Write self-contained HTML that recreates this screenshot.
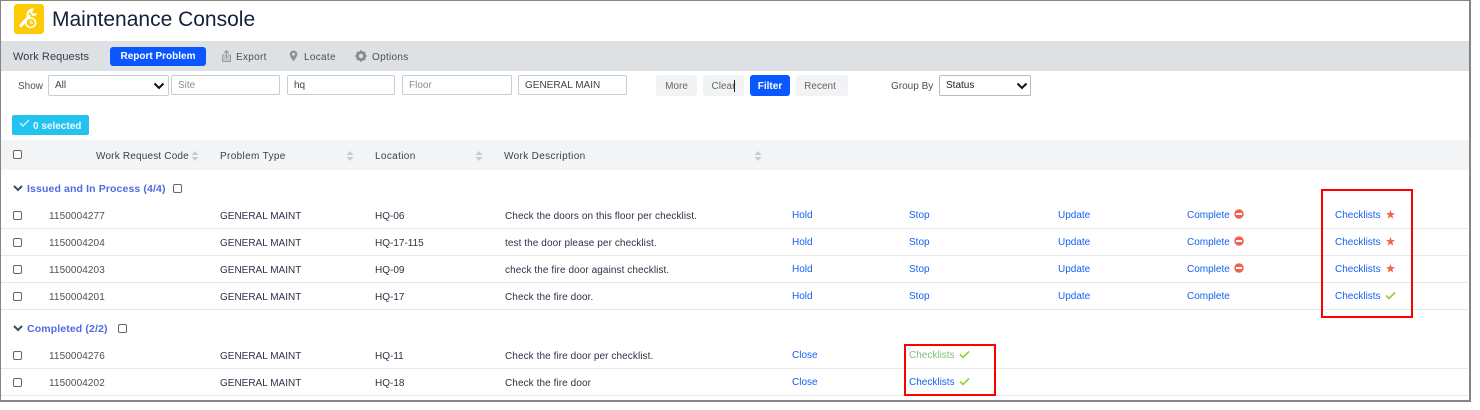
<!DOCTYPE html>
<html><head><meta charset="utf-8"><title>Maintenance Console</title>
<style>
html,body{margin:0;padding:0;background:#fff}
#p{position:relative;width:1480px;height:410px;overflow:hidden;background:#fff;font-family:"Liberation Sans",sans-serif;font-size:10px;color:#2b3344}
#p>*{position:absolute}
.t{line-height:14px;white-space:nowrap}
.x{letter-spacing:.08px}
.l{color:#1560f5}
.g{color:#4a5058}
.h{font-size:10px;letter-spacing:.35px;color:#39404e;font-weight:normal}
.i{border:1px solid #c9cdd2;border-radius:2px;background:#fff;box-sizing:border-box;line-height:20px;padding-left:6px;white-space:nowrap;color:#444}
.ph{color:#8a8f96}
.b{border-radius:3px;text-align:center;line-height:23px;background:#f1f3f5;color:#666}
.cb{width:7px;height:7px;border:1px solid #666;border-radius:2px;background:#fff;box-sizing:content-box}
.d{left:1px;width:1467px;height:1px;background:#e6e7e8}
.hq{font-weight:bold;color:#4f6be3;font-size:10.5px;line-height:14px;white-space:nowrap;letter-spacing:.12px}
.rb{border:2px solid #f00;box-sizing:border-box}
</style></head><body><div id="p">
<div style="left:0;top:0;width:1470px;height:1px;background:#858585"></div>
<div style="left:0;top:0;width:1px;height:402px;background:#858585"></div>
<div style="left:1469px;top:0;width:2px;height:402px;background:#858585"></div>
<div style="left:0;top:400px;width:1471px;height:2px;background:#858585"></div>

<div style="left:14px;top:4px;width:30px;height:30px;background:#fccb05;border-radius:3px"></div>
<svg style="left:14px;top:4px" width="30" height="30" viewBox="0 0 30 30" fill="none" stroke="#fff"><path d="M7 21.500l8-9" stroke-width="3.200" stroke-linecap="round"/><path d="M14 13c-1.500-3.500 1-7.500 4.500-7.500l-1.500 3 2 2.500 3.500-1" stroke-width="2"/><circle cx="16.700" cy="18.700" r="4.800" stroke-width="1.600" fill="#fccb05"/><path d="M16.700 16.200v2.800h2.300" stroke-width="1.200"/></svg>
<div class="t" style="left:52px;top:9px;font-size:21px;line-height:22px;color:#14213d">Maintenance Console</div>

<div style="left:1px;top:41px;width:1468px;height:30px;background:#dee1e4"></div>
<div class="t" style="left:13px;top:50px;font-size:11px;letter-spacing:.08px;color:#333b4c">Work Requests</div>
<div style="left:110px;top:47px;width:96px;height:19px;background:#0a57ff;border-radius:3px;color:#fff;font-weight:bold;text-align:center;line-height:20px;font-size:10px">Report Problem</div>
<svg style="left:221px;top:49px" width="11" height="14" viewBox="0 0 11 14" fill="none" stroke="#9a9ea3"><path d="M3.500 6H1.500v6.500h8V6H7.500" fill="#c4c8cb"/><path d="M5.500 9V2M3.300 4L5.500 1.700 7.700 4" stroke-width="1.300"/></svg>
<div class="t g" style="left:236px;top:51px;letter-spacing:.3px">Export</div>
<svg style="left:289px;top:50px" width="9" height="12" viewBox="0 0 9 12"><path d="M4.500 0.500a3.800 3.800 0 0 1 3.800 3.800c0 2.500-3.800 7-3.800 7s-3.800-4.500-3.800-7A3.800 3.800 0 0 1 4.500 .5z" fill="#8e9297"/><circle cx="4.500" cy="4.300" r="1.400" fill="#dee1e4"/></svg>
<div class="t g" style="left:304px;top:51px;letter-spacing:.3px">Locate</div>
<svg style="left:355px;top:50px" width="12" height="12" viewBox="0 0 12 12"><circle cx="6" cy="6" r="3.700" fill="none" stroke="#85898e" stroke-width="2.400"/><path d="M6 .3v11.400M.3 6h11.400M2 2l8 8M10 2l-8 8" stroke="#85898e" stroke-width="1.800"/><circle cx="6" cy="6" r="2.200" fill="#dee1e4"/></svg>
<div class="t g" style="left:372px;top:51px;letter-spacing:.3px">Options</div>

<div class="t g" style="left:18px;top:80px">Show</div>
<div class="i" style="left:48px;top:75px;width:121px;height:21px">All</div>
<svg style="left:153px;top:82px" width="12" height="8" viewBox="0 0 12 8" fill="none" stroke="#111" stroke-width="2"><path d="M1.500 1.500L6 6l4.500-4.500"/></svg>
<div class="i ph" style="left:171px;top:75px;width:109px;height:20px">Site</div>
<div class="i" style="left:287px;top:75px;width:108px;height:20px">hq</div>
<div class="i ph" style="left:402px;top:75px;width:110px;height:20px">Floor</div>
<div class="i" style="left:518px;top:75px;width:109px;height:20px">GENERAL MAIN</div>
<div class="b" style="left:656px;top:75px;width:41px;height:21px">More</div>
<div class="b" style="left:703px;top:75px;width:41px;height:21px">Clear</div>
<div style="left:734px;top:80px;width:1px;height:12px;background:#222"></div>
<div class="b" style="left:750px;top:75px;width:40px;height:21px;background:#0a57ff;color:#fff;font-weight:bold">Filter</div>
<div class="b" style="left:796px;top:75px;width:48px;padding-right:4px;height:21px">Recent</div>
<div class="t g" style="left:891px;top:80px">Group By</div>
<div class="i" style="left:939px;top:75px;width:92px;height:21px;border-color:#bbb;color:#222">Status</div>
<svg style="left:1016px;top:82px" width="12" height="8" viewBox="0 0 12 8" fill="none" stroke="#111" stroke-width="2"><path d="M1.500 1.500L6 6l4.500-4.500"/></svg>

<div style="left:12px;top:115px;width:77px;height:20px;background:#22c3ee;border-radius:2px"></div>
<svg style="left:19px;top:119px" width="11" height="9" viewBox="0 0 11 9" fill="none" stroke="#d6f3fb" stroke-width="1.300"><path d="M1 4l3 3 6-6"/></svg>
<div class="t" style="left:33px;top:120px;color:#eefaff;font-weight:bold">0 selected</div>

<div style="left:1px;top:140px;width:1468px;height:30px;background:#f2f4f6"></div>
<div class="cb" style="left:13px;top:150px"></div>
<div class="t h" style="left:96px;top:150px;letter-spacing:.18px">Work Request Code</div>
<svg style="left:191px;top:151px" width="8" height="10" viewBox="0 0 8 10" fill="#c8ccd0"><path d="M4 0l3.500 4h-7zM4 10l3.500-4h-7z"/></svg>
<div class="t h" style="left:220px;top:150px">Problem Type</div>
<svg style="left:346px;top:151px" width="8" height="10" viewBox="0 0 8 10" fill="#c8ccd0"><path d="M4 0l3.500 4h-7zM4 10l3.500-4h-7z"/></svg>
<div class="t h" style="left:375px;top:150px">Location</div>
<svg style="left:475px;top:151px" width="8" height="10" viewBox="0 0 8 10" fill="#c8ccd0"><path d="M4 0l3.500 4h-7zM4 10l3.500-4h-7z"/></svg>
<div class="t h" style="left:504px;top:150px">Work Description</div>
<svg style="left:754px;top:151px" width="8" height="10" viewBox="0 0 8 10" fill="#c8ccd0"><path d="M4 0l3.500 4h-7zM4 10l3.500-4h-7z"/></svg>

<svg style="left:13px;top:185px" width="10" height="7" viewBox="0 0 10 7" fill="none" stroke="#3a4a68" stroke-width="2"><path d="M1 1l4 4 4-4"/></svg>
<div class="hq" style="left:27px;top:182px">Issued and In Process (4/4)</div>
<div class="cb" style="left:173px;top:184px"></div>

<div class="cb" style="left:13px;top:211px"></div>
<div class="t g" style="left:49px;top:210px;letter-spacing:.1px">1150004277</div>
<div class="t" style="left:220px;top:210px">GENERAL MAINT</div>
<div class="t" style="left:375px;top:210px">HQ-06</div>
<div class="t x" style="left:505px;top:210px">Check the doors on this floor per checklist.</div>
<div class="t l" style="left:792px;top:209px">Hold</div>
<div class="t l" style="left:909px;top:209px">Stop</div>
<div class="t l" style="left:1058px;top:209px">Update</div>
<div class="t l" style="left:1187px;top:209px">Complete</div>
<svg style="left:1234px;top:209px" width="10" height="10" viewBox="0 0 10 10"><circle cx="5" cy="5" r="4.700" fill="#f4604c"/><rect x="2" y="4" width="6" height="2" fill="#fff"/></svg>
<div class="t l" style="left:1335px;top:209px">Checklists</div>
<svg style="left:1386px;top:210px" width="9" height="9" viewBox="0 0 10 10"><path d="M5 0l1.300 3.500H10L7 5.800 8.100 9.600 5 7.400 1.900 9.600 3 5.800 0 3.500h3.700z" fill="#f4604c"/></svg>
<div class="d" style="top:228px"></div>

<div class="cb" style="left:13px;top:238px"></div>
<div class="t g" style="left:49px;top:237px;letter-spacing:.1px">1150004204</div>
<div class="t" style="left:220px;top:237px">GENERAL MAINT</div>
<div class="t" style="left:375px;top:237px">HQ-17-115</div>
<div class="t x" style="left:505px;top:237px">test the door please per checklist.</div>
<div class="t l" style="left:792px;top:236px">Hold</div>
<div class="t l" style="left:909px;top:236px">Stop</div>
<div class="t l" style="left:1058px;top:236px">Update</div>
<div class="t l" style="left:1187px;top:236px">Complete</div>
<svg style="left:1234px;top:236px" width="10" height="10" viewBox="0 0 10 10"><circle cx="5" cy="5" r="4.700" fill="#f4604c"/><rect x="2" y="4" width="6" height="2" fill="#fff"/></svg>
<div class="t l" style="left:1335px;top:236px">Checklists</div>
<svg style="left:1386px;top:237px" width="9" height="9" viewBox="0 0 10 10"><path d="M5 0l1.300 3.500H10L7 5.800 8.100 9.600 5 7.400 1.900 9.600 3 5.800 0 3.500h3.700z" fill="#f4604c"/></svg>
<div class="d" style="top:255px"></div>

<div class="cb" style="left:13px;top:265px"></div>
<div class="t g" style="left:49px;top:264px;letter-spacing:.1px">1150004203</div>
<div class="t" style="left:220px;top:264px">GENERAL MAINT</div>
<div class="t" style="left:375px;top:264px">HQ-09</div>
<div class="t x" style="left:505px;top:264px">check the fire door against checklist.</div>
<div class="t l" style="left:792px;top:263px">Hold</div>
<div class="t l" style="left:909px;top:263px">Stop</div>
<div class="t l" style="left:1058px;top:263px">Update</div>
<div class="t l" style="left:1187px;top:263px">Complete</div>
<svg style="left:1234px;top:263px" width="10" height="10" viewBox="0 0 10 10"><circle cx="5" cy="5" r="4.700" fill="#f4604c"/><rect x="2" y="4" width="6" height="2" fill="#fff"/></svg>
<div class="t l" style="left:1335px;top:263px">Checklists</div>
<svg style="left:1386px;top:264px" width="9" height="9" viewBox="0 0 10 10"><path d="M5 0l1.300 3.500H10L7 5.800 8.100 9.600 5 7.400 1.900 9.600 3 5.800 0 3.500h3.700z" fill="#f4604c"/></svg>
<div class="d" style="top:282px"></div>

<div class="cb" style="left:13px;top:292px"></div>
<div class="t g" style="left:49px;top:291px;letter-spacing:.1px">1150004201</div>
<div class="t" style="left:220px;top:291px">GENERAL MAINT</div>
<div class="t" style="left:375px;top:291px">HQ-17</div>
<div class="t x" style="left:505px;top:291px">Check the fire door.</div>
<div class="t l" style="left:792px;top:290px">Hold</div>
<div class="t l" style="left:909px;top:290px">Stop</div>
<div class="t l" style="left:1058px;top:290px">Update</div>
<div class="t l" style="left:1187px;top:290px">Complete</div>
<div class="t l" style="left:1335px;top:290px">Checklists</div>
<svg style="left:1385px;top:291px" width="11" height="9" viewBox="0 0 11 9" fill="none" stroke="#92cf2f" stroke-width="1.600"><path d="M1 4.500l3 3 6-6"/></svg>
<div class="d" style="top:309px"></div>

<svg style="left:13px;top:325px" width="10" height="7" viewBox="0 0 10 7" fill="none" stroke="#3a4a68" stroke-width="2"><path d="M1 1l4 4 4-4"/></svg>
<div class="hq" style="left:27px;top:322px">Completed (2/2)</div>
<div class="cb" style="left:118px;top:324px"></div>

<div class="cb" style="left:13px;top:351px"></div>
<div class="t g" style="left:49px;top:350px;letter-spacing:.1px">1150004276</div>
<div class="t" style="left:220px;top:350px">GENERAL MAINT</div>
<div class="t" style="left:375px;top:350px">HQ-11</div>
<div class="t x" style="left:505px;top:350px">Check the fire door per checklist.</div>
<div class="t l" style="left:792px;top:349px">Close</div>
<div class="t" style="left:909px;top:349px;color:#7fbf7a">Checklists</div>
<svg style="left:959px;top:350px" width="11" height="9" viewBox="0 0 11 9" fill="none" stroke="#92cf2f" stroke-width="1.600"><path d="M1 4.500l3 3 6-6"/></svg>
<div class="d" style="top:368px"></div>

<div class="cb" style="left:13px;top:378px"></div>
<div class="t g" style="left:49px;top:377px;letter-spacing:.1px">1150004202</div>
<div class="t" style="left:220px;top:377px">GENERAL MAINT</div>
<div class="t" style="left:375px;top:377px">HQ-18</div>
<div class="t x" style="left:505px;top:377px">Check the fire door</div>
<div class="t l" style="left:792px;top:376px">Close</div>
<div class="t l" style="left:909px;top:376px">Checklists</div>
<svg style="left:959px;top:377px" width="11" height="9" viewBox="0 0 11 9" fill="none" stroke="#92cf2f" stroke-width="1.600"><path d="M1 4.500l3 3 6-6"/></svg>
<div class="d" style="top:395px"></div>

<div class="rb" style="left:1321px;top:189px;width:92px;height:129px"></div>
<div class="rb" style="left:904px;top:344px;width:92px;height:52px"></div>
</div></body></html>
